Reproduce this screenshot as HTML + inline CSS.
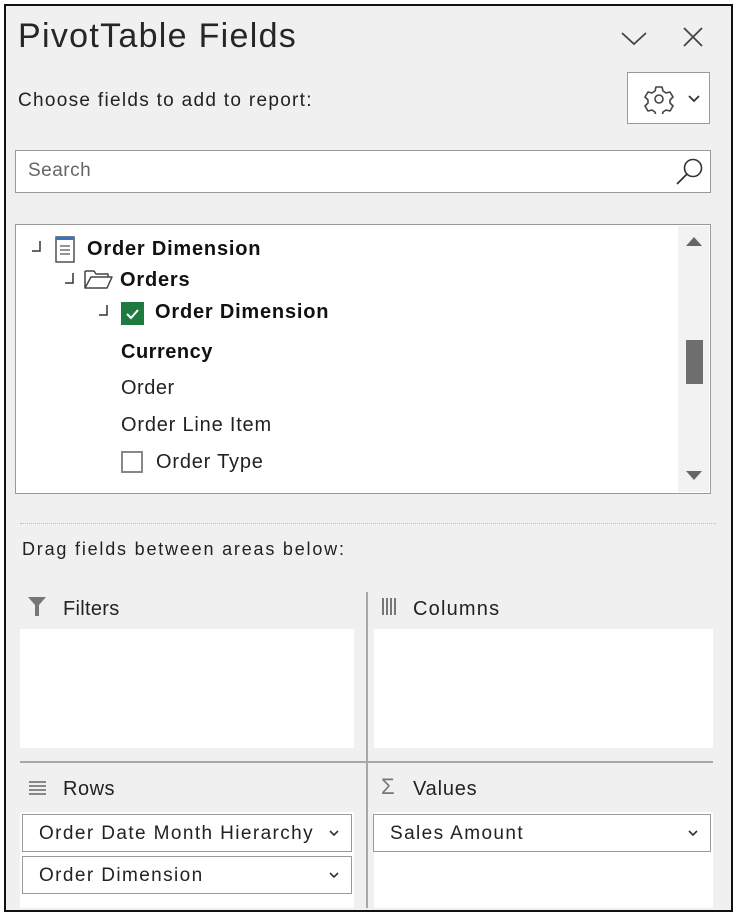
<!DOCTYPE html>
<html><head><style>
body{margin:0;width:740px;height:918px;background:#fff;position:relative;overflow:hidden;font-family:"Liberation Sans",sans-serif;color:#222}
.a{position:absolute}
.frame{left:4px;top:4px;width:725px;height:904px;border:2px solid #111;background:#f0f0f0}
.t{position:absolute;white-space:nowrap}
.b{font-weight:bold}
.dd{position:absolute;background:#fff;border:1px solid #9a9a9a;font-size:19px;line-height:38px;padding-left:16px;box-sizing:border-box;letter-spacing:1.4px}
.dd svg{position:absolute;right:12px;top:15px}
</style></head><body>
<div class="a frame"></div>
<div class="t" style="left:18px;top:17px;font-size:34px;color:#262626;letter-spacing:1.3px">PivotTable Fields</div>
<svg class="a" style="left:620px;top:28px" width="28" height="20"><path d="M2 5 L14 16 L26 5" fill="none" stroke="#444" stroke-width="1.8"/></svg>
<svg class="a" style="left:682px;top:26px" width="22" height="22"><path d="M2 2 L20 20 M20 2 L2 20" fill="none" stroke="#444" stroke-width="1.8"/></svg>
<div class="t" style="left:18px;top:90px;font-size:19px;letter-spacing:1.3px">Choose fields to add to report:</div>
<div class="a" style="left:627px;top:72px;width:83px;height:52px;background:#fff;border:1px solid #999;box-sizing:border-box"></div>
<svg class="a" style="left:644px;top:84px" width="30" height="30" viewBox="0 0 30 30"><path d="M12 3h6l1 4 3 2 4-1 3 5-3 3v3l3 3-3 5-4-1-3 2-1 4h-6l-1-4-3-2-4 1-3-5 3-3v-3l-3-3 3-5 4 1 3-2z" fill="none" stroke="#444" stroke-width="1.6" stroke-linejoin="round"/><circle cx="15" cy="15" r="4" fill="none" stroke="#444" stroke-width="1.6"/></svg>
<svg class="a" style="left:688px;top:95px" width="12" height="8"><path d="M1 1 L6 6 L11 1" fill="none" stroke="#333" stroke-width="1.8"/></svg>
<div class="a" style="left:15px;top:150px;width:696px;height:43px;background:#fff;border:1px solid #999;box-sizing:border-box"></div>
<div class="t" style="left:28px;top:160px;font-size:19px;color:#666;letter-spacing:0.5px">Search</div>
<svg class="a" style="left:674px;top:156px" width="32" height="32"><circle cx="19" cy="12" r="8.5" fill="none" stroke="#333" stroke-width="1.6"/><path d="M13 18 L3 28" stroke="#333" stroke-width="1.8"/></svg>
<div class="a" style="left:15px;top:224px;width:696px;height:270px;background:#fff;border:1px solid #999;box-sizing:border-box"></div>
<div class="a" style="left:678px;top:226px;width:31px;height:266px;background:#f2f2f2"></div>
<svg class="a" style="left:684px;top:234px" width="20" height="14"><path d="M2 12 L10 3 L18 12 Z" fill="#666"/></svg>
<div class="a" style="left:686px;top:340px;width:17px;height:44px;background:#6e6e6e"></div>
<svg class="a" style="left:684px;top:469px" width="20" height="14"><path d="M2 2 L10 11 L18 2 Z" fill="#666"/></svg>
<svg class="a" style="left:30px;top:240px" width="12" height="14"><path d="M10 1 V11 H2" fill="none" stroke="#333" stroke-width="1.5"/></svg>
<svg class="a" style="left:54px;top:235px" width="24" height="30"><rect x="2" y="2" width="18" height="25" fill="#fff" stroke="#444" stroke-width="1.4"/><rect x="2" y="2" width="18" height="3" fill="#2b78c8"/><path d="M6 11h10M6 15h10M6 19h10" stroke="#555" stroke-width="1.3"/></svg>
<div class="t b" style="left:87px;top:238px;font-size:20px;color:#111;letter-spacing:0.8px">Order Dimension</div>
<svg class="a" style="left:63px;top:272px" width="12" height="14"><path d="M10 1 V11 H2" fill="none" stroke="#333" stroke-width="1.5"/></svg>
<svg class="a" style="left:83px;top:268px" width="32" height="24"><path d="M2 3h9l2 3h12v3 M2 3v17h22l5-11H8l-6 11" fill="none" stroke="#444" stroke-width="1.5" stroke-linejoin="round"/></svg>
<div class="t b" style="left:120px;top:269px;font-size:20px;color:#111;letter-spacing:0.8px">Orders</div>
<svg class="a" style="left:97px;top:304px" width="12" height="14"><path d="M10 1 V11 H2" fill="none" stroke="#333" stroke-width="1.5"/></svg>
<svg class="a" style="left:121px;top:302px" width="23" height="23"><rect width="23" height="23" fill="#1e7a3e"/><path d="M6 12 L10 16 L17 8" fill="none" stroke="#fff" stroke-width="2"/></svg>
<div class="t b" style="left:155px;top:301px;font-size:20px;color:#111;letter-spacing:0.8px">Order Dimension</div>
<div class="t b" style="left:121px;top:341px;font-size:20px;color:#111;letter-spacing:0.5px">Currency</div>
<div class="t" style="left:121px;top:377px;font-size:20px;color:#222;letter-spacing:0.5px">Order</div>
<div class="t" style="left:121px;top:414px;font-size:20px;color:#222;letter-spacing:0.8px">Order Line Item</div>
<div class="a" style="left:121px;top:451px;width:22px;height:22px;border:2px solid #888;box-sizing:border-box;background:#fff"></div>
<div class="t" style="left:156px;top:451px;font-size:20px;color:#222;letter-spacing:0.8px">Order Type</div>
<div class="a" style="left:20px;top:523px;width:696px;border-top:1px dotted #bbb"></div>
<div class="t" style="left:22px;top:539px;font-size:18px;letter-spacing:1.8px">Drag fields between areas below:</div>
<svg class="a" style="left:27px;top:596px" width="20" height="22"><path d="M1 1h18l-7 8v11h-4v-11z" fill="#777"/></svg>
<div class="t" style="left:63px;top:598px;font-size:20px;letter-spacing:0.3px">Filters</div>
<svg class="a" style="left:382px;top:597px" width="16" height="20"><path d="M1 1v17M5 1v17M9 1v17M13 1v17" stroke="#777" stroke-width="2"/></svg>
<div class="t" style="left:413px;top:598px;font-size:20px;letter-spacing:1.2px">Columns</div>
<div class="a" style="left:20px;top:629px;width:334px;height:119px;background:#fff"></div>
<div class="a" style="left:374px;top:629px;width:339px;height:119px;background:#fff"></div>
<div class="a" style="left:366px;top:592px;width:2px;height:316px;background:#a8a8a8"></div>
<div class="a" style="left:20px;top:761px;width:693px;height:2px;background:#a8a8a8"></div>
<svg class="a" style="left:28px;top:780px" width="20" height="16"><path d="M1 2h17M1 6h17M1 10h17M1 14h17" stroke="#888" stroke-width="2"/></svg>
<div class="t" style="left:63px;top:778px;font-size:20px;letter-spacing:0.5px">Rows</div>
<div class="t" style="left:381px;top:774px;font-size:22px;color:#777">Σ</div>
<div class="t" style="left:413px;top:778px;font-size:20px;letter-spacing:0.8px">Values</div>
<div class="a" style="left:20px;top:812px;width:334px;height:96px;background:#fff"></div>
<div class="a" style="left:374px;top:812px;width:339px;height:96px;background:#fff"></div>
<div class="dd" style="left:22px;top:814px;width:330px;height:38px">Order Date Month Hierarchy<svg width="10" height="7"><path d="M1 1 L5 5 L9 1" fill="none" stroke="#333" stroke-width="1.6"/></svg></div>
<div class="dd" style="left:22px;top:856px;width:330px;height:38px">Order Dimension<svg width="10" height="7"><path d="M1 1 L5 5 L9 1" fill="none" stroke="#333" stroke-width="1.6"/></svg></div>
<div class="dd" style="left:373px;top:814px;width:338px;height:38px">Sales Amount<svg width="10" height="7"><path d="M1 1 L5 5 L9 1" fill="none" stroke="#333" stroke-width="1.6"/></svg></div>
</body></html>
